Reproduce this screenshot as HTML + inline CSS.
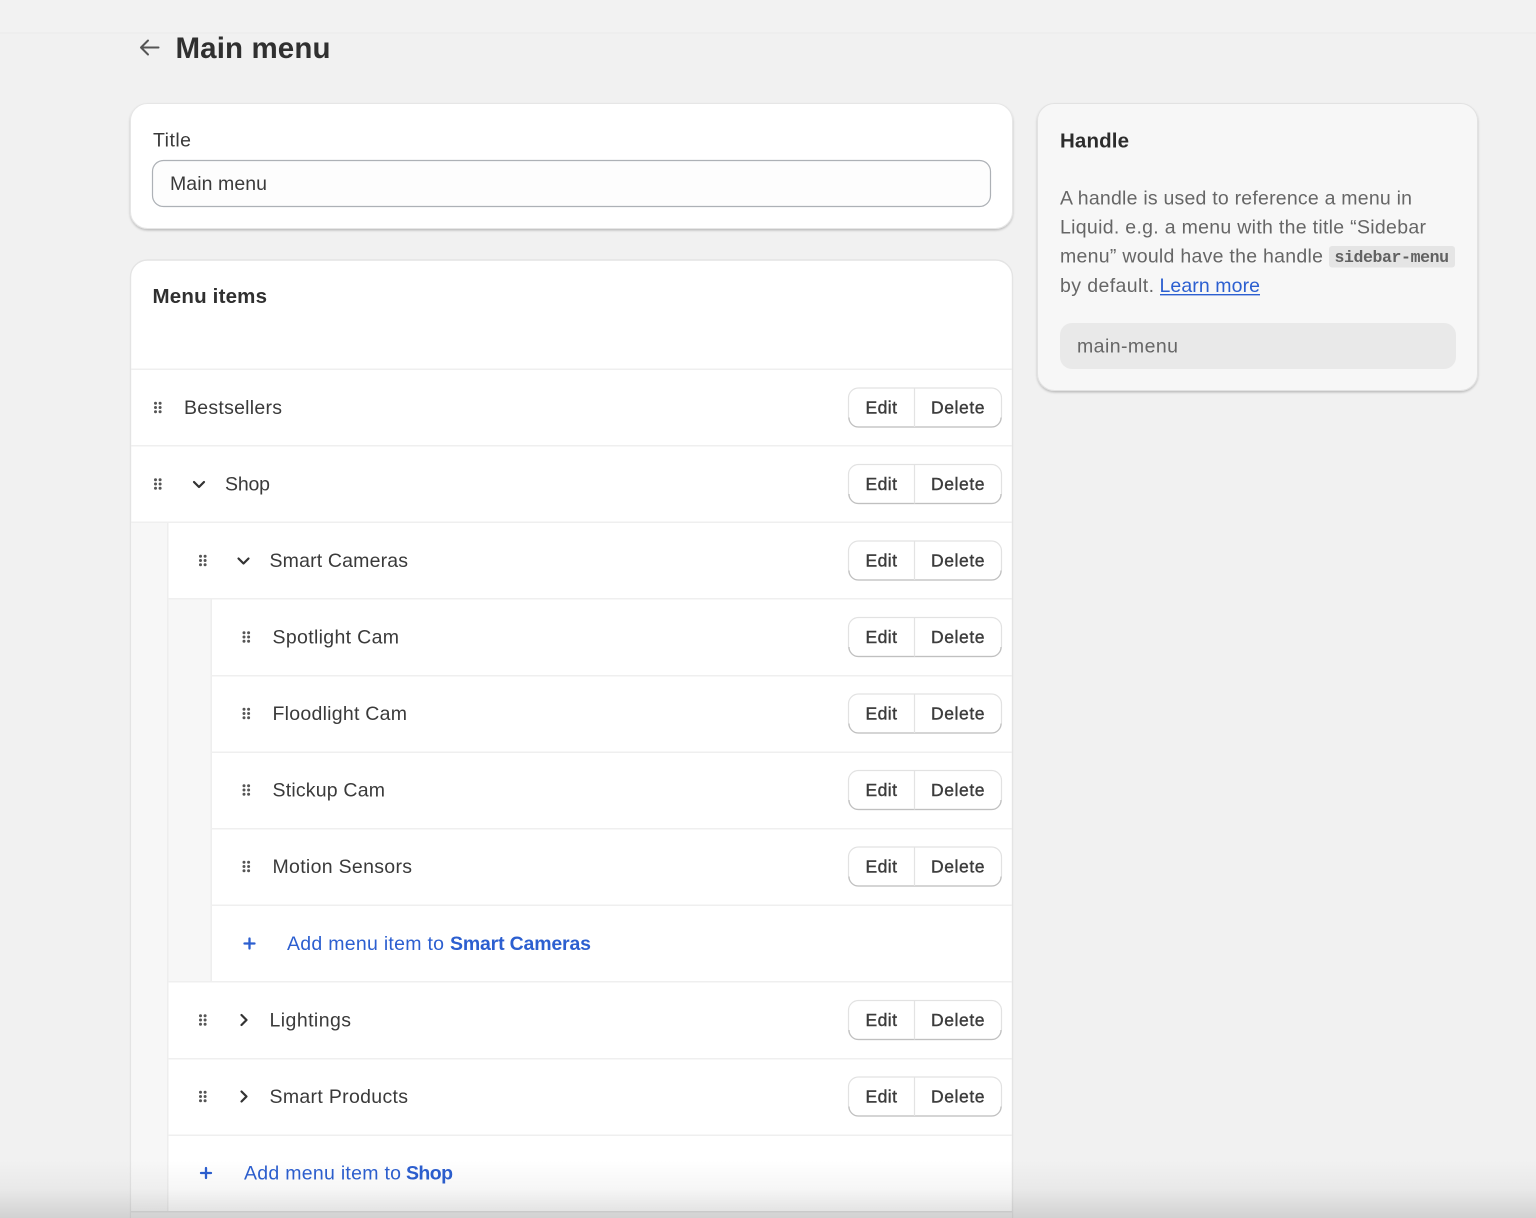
<!DOCTYPE html>
<html lang="en"><head><meta charset="utf-8"><title>Main menu</title>
<style>
html,body{margin:0;padding:0;background:#f1f1f1;width:1536px;height:1218px;overflow:hidden}
svg{display:block;position:absolute;left:0;top:0;filter:blur(.35px)}
text{font-family:"Liberation Sans",sans-serif;font-size:19.5px;fill:#3a3a3a}
.m{stroke:#3c3c3c;stroke-width:.4px;fill:#3c3c3c;font-size:17.5px}
.b{font-weight:700}
.p{fill:#666}
.l{fill:#2c5fd0}
.ln{fill:#efefef}
</style></head><body>
<svg width="1536" height="1218" viewBox="0 0 1536 1218" xmlns="http://www.w3.org/2000/svg">
<defs>
<filter id="s" x="-5%" y="-5%" width="110%" height="110%"><feDropShadow dx="0" dy="1.5" stdDeviation="1" flood-color="#000" flood-opacity=".22"/></filter>
<linearGradient id="g" x1="0" y1="0" x2="0" y2="1"><stop offset="0" stop-color="#000" stop-opacity="0"/><stop offset=".5" stop-color="#000" stop-opacity=".035"/><stop offset="1" stop-color="#000" stop-opacity=".13"/></linearGradient>
<g id="d" fill="#555"><circle cx="-2.500" cy="-4.200" r="1.500"/><circle cx="2.100" cy="-4.200" r="1.500"/><circle cx="-2.500" cy="0" r="1.500"/><circle cx="2.100" cy="0" r="1.500"/><circle cx="-2.500" cy="4.200" r="1.500"/><circle cx="2.100" cy="4.200" r="1.500"/></g>
<g id="btn"><rect x="848.500" y="-19.500" width="153" height="39" rx="10" fill="#fff" stroke="#e2e2e2" stroke-width="1.200"/><path d="M849 10a9.500 9.500 0 0 0 10 9.500h132a9.500 9.500 0 0 0 10-9.500" fill="none" stroke="#c0c0c0" stroke-width="1.200"/><path d="M914.500-19.500V19.500" stroke="#e3e3e3" stroke-width="1.200"/></g>
<path id="cd" d="M-5-2.500L0 2.500L5-2.500" fill="none" stroke="#333" stroke-width="2.200" stroke-linecap="round" stroke-linejoin="round"/>
<path id="cr" d="M-2.500-5L2.500 0L-2.500 5" fill="none" stroke="#333" stroke-width="2.200" stroke-linecap="round" stroke-linejoin="round"/>
<path id="pl" d="M-5 0H5M0-5V5" fill="none" stroke="#2c5fd0" stroke-width="2.300" stroke-linecap="round"/>
</defs>

<rect width="1536" height="1218" fill="#f1f1f1"/>
<rect width="1536" height="33" fill="#f2f2f2"/>
<rect y="32.500" width="1536" height="1" fill="#ebebeb"/>

<path d="M158.500 47.500H141.500M148 40.500L141 47.500L148 54.500" fill="none" stroke="#555" stroke-width="2" stroke-linecap="round" stroke-linejoin="round"/>
<text class="b" x="175.500" y="58" style="font-size:29.500px;fill:#303030" textLength="155">Main menu</text>

<!-- Title card -->
<rect x="130.500" y="103.500" width="882" height="125" rx="17" fill="#fff" stroke="#e6e6e6" filter="url(#s)"/>
<text x="153" y="146.500" textLength="38">Title</text>
<rect x="152.500" y="160.500" width="838" height="46" rx="11" fill="#fdfdfd" stroke="#adb1b6" stroke-width="1.200"/>
<text x="170" y="190" textLength="97">Main menu</text>

<!-- Menu card -->
<path d="M130.500 1240V277a17 17 0 0 1 17-17H995.500a17 17 0 0 1 17 17V1240Z" fill="#fff" stroke="#e4e4e4" stroke-width="1.400"/>
<text class="b" x="152.500" y="303" style="font-size:20.500px;fill:#303030" textLength="114.500">Menu items</text>

<rect x="131.500" y="522" width="36.500" height="690" fill="#f7f7f7"/>
<rect x="168" y="599" width="43" height="383" fill="#f7f7f7"/>
<rect x="167" y="522" width="1.500" height="690" fill="#eeeeee"/>
<rect x="210.500" y="599" width="1.500" height="383" fill="#eeeeee"/>

<rect class="ln" x="131" y="368.500" width="881" height="1.500"/>
<rect class="ln" x="131" y="445" width="881" height="1.500"/>
<rect class="ln" x="131" y="521.500" width="881" height="1.500"/>
<rect class="ln" x="168" y="598" width="844" height="1.500"/>
<rect class="ln" x="211" y="675" width="801" height="1.500"/>
<rect class="ln" x="211" y="751.500" width="801" height="1.500"/>
<rect class="ln" x="211" y="828" width="801" height="1.500"/>
<rect class="ln" x="211" y="904.500" width="801" height="1.500"/>
<rect class="ln" x="168" y="981" width="844" height="1.500"/>
<rect class="ln" x="168" y="1058" width="844" height="1.500"/>
<rect class="ln" x="168" y="1134.500" width="844" height="1.500"/>
<rect x="131" y="1211" width="881" height="7" fill="#f1f1f1"/>
<rect x="131" y="1211" width="881" height="1.500" fill="#e3e3e3"/>

<!-- rows -->
<use href="#d" x="158" y="407.500"/>
<text x="184" y="414" textLength="98">Bestsellers</text>
<use href="#btn" y="407.500"/>
<text class="m" x="865.500" y="413.500" textLength="31.500">Edit</text><text class="m" x="931" y="413.500" textLength="53.500">Delete</text>

<use href="#d" x="158" y="484"/><use href="#cd" x="199" y="484.500"/>
<text x="225" y="490.500" textLength="45">Shop</text>
<use href="#btn" y="484"/>
<text class="m" x="865.500" y="490" textLength="31.500">Edit</text><text class="m" x="931" y="490" textLength="53.500">Delete</text>

<use href="#d" x="203" y="560.500"/><use href="#cd" x="243.500" y="561"/>
<text x="269.500" y="567" textLength="138.500">Smart Cameras</text>
<use href="#btn" y="560.500"/>
<text class="m" x="865.500" y="566.500" textLength="31.500">Edit</text><text class="m" x="931" y="566.500" textLength="53.500">Delete</text>

<use href="#d" x="246.500" y="637"/>
<text x="272.500" y="643.500" textLength="126.500">Spotlight Cam</text>
<use href="#btn" y="637"/>
<text class="m" x="865.500" y="643" textLength="31.500">Edit</text><text class="m" x="931" y="643" textLength="53.500">Delete</text>

<use href="#d" x="246.500" y="713.500"/>
<text x="272.500" y="720" textLength="134.500">Floodlight Cam</text>
<use href="#btn" y="713.500"/>
<text class="m" x="865.500" y="719.500" textLength="31.500">Edit</text><text class="m" x="931" y="719.500" textLength="53.500">Delete</text>

<use href="#d" x="246.500" y="790"/>
<text x="272.500" y="796.500" textLength="112.500">Stickup Cam</text>
<use href="#btn" y="790"/>
<text class="m" x="865.500" y="796" textLength="31.500">Edit</text><text class="m" x="931" y="796" textLength="53.500">Delete</text>

<use href="#d" x="246.500" y="866.500"/>
<text x="272.500" y="873" textLength="139.500">Motion Sensors</text>
<use href="#btn" y="866.500"/>
<text class="m" x="865.500" y="872.500" textLength="31.500">Edit</text><text class="m" x="931" y="872.500" textLength="53.500">Delete</text>

<use href="#pl" x="249.500" y="943.500"/>
<text class="l" x="287" y="950" textLength="157">Add menu item to</text>
<text class="l b" x="450" y="950" textLength="141">Smart Cameras</text>

<use href="#d" x="203" y="1020"/><use href="#cr" x="244" y="1020"/>
<text x="269.500" y="1026.500" textLength="81.500">Lightings</text>
<use href="#btn" y="1020"/>
<text class="m" x="865.500" y="1026" textLength="31.500">Edit</text><text class="m" x="931" y="1026" textLength="53.500">Delete</text>

<use href="#d" x="203" y="1096.500"/><use href="#cr" x="244" y="1096.500"/>
<text x="269.500" y="1103" textLength="138.500">Smart Products</text>
<use href="#btn" y="1096.500"/>
<text class="m" x="865.500" y="1102.500" textLength="31.500">Edit</text><text class="m" x="931" y="1102.500" textLength="53.500">Delete</text>

<use href="#pl" x="206" y="1173"/>
<text class="l" x="244" y="1179.500" textLength="157">Add menu item to</text>
<text class="l b" x="406" y="1179.500" textLength="47">Shop</text>

<!-- Handle card -->
<rect x="1037.500" y="103.500" width="440" height="287" rx="17" fill="#f7f7f7" stroke="#e2e2e2" filter="url(#s)"/>
<text class="b" x="1060" y="147.500" style="font-size:20.500px;fill:#2c2c2c" textLength="69">Handle</text>
<text class="p" x="1060" y="204.500" textLength="352">A handle is used to reference a menu in</text>
<text class="p" x="1060" y="233.500" textLength="366">Liquid. e.g. a menu with the title “Sidebar</text>
<text class="p" x="1060" y="262.500" textLength="263">menu” would have the handle</text>
<rect x="1329" y="246" width="126" height="21.500" rx="3" fill="#e5e5e5"/>
<text x="1334.500" y="262" style="font-family:'Liberation Mono',monospace;font-weight:700;font-size:16.500px;fill:#616161" textLength="114.500">sidebar-menu</text>
<text class="p" x="1060" y="292" textLength="94">by default.</text>
<text class="l" x="1159.500" y="292" textLength="100.500">Learn more</text>
<rect x="1160" y="294" width="100" height="1.400" fill="#2c5fd0"/>
<rect x="1060" y="323" width="396" height="46" rx="12" fill="#e9e9e9"/>
<text class="p" x="1077" y="352.500" textLength="101">main-menu</text>

<rect y="1160" width="1536" height="58" fill="url(#g)"/>
</svg>
</body></html>
